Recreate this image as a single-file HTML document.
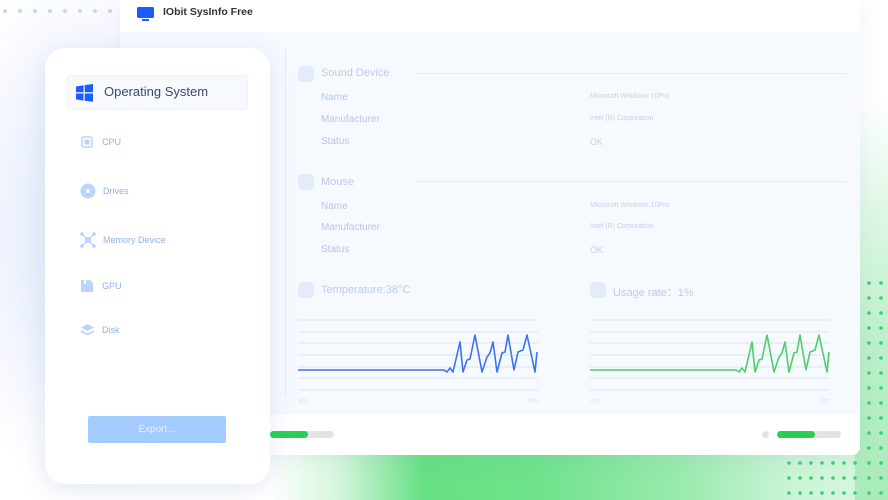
<!DOCTYPE html>
<html style="width:888px;height:500px;overflow:hidden"><head><meta charset="utf-8"><style>
*{margin:0;padding:0;box-sizing:border-box}
body{width:888px;height:500px;overflow:hidden;background:#fff;font-family:"Liberation Sans",sans-serif;position:relative}
.abs{position:absolute}
.t{color:#b5c6ea;font-size:10px}
.v{color:#c3d0ec;font-size:7px}
.h{color:#bccbee;font-size:11px}
.chk{width:16px;height:16px;border-radius:4px;background:#e4ecfb}
.nav{position:absolute;left:80px;font-size:9px;color:#8fb0f0;display:flex;align-items:center}
</style></head><body>
<div class="abs" style="left:-60px;top:-40px;width:300px;height:540px;background:radial-gradient(closest-side,#dfe8fb 0%,#eef3fd 55%,rgba(255,255,255,0) 100%)"></div>
<div class="abs" style="left:270px;top:440px;width:590px;height:60px;background:linear-gradient(90deg,rgba(255,255,255,0) 0%,rgba(180,240,195,.6) 12%,#66e084 26%,#6fe28b 45%,#9beaaf 70%,#c9f4d5 88%,#d6f6de 100%)"></div>
<div class="abs" style="left:855px;top:100px;width:33px;height:400px;background:linear-gradient(#fff 0%,#e2f8e8 25%,#bdf0ca 60%,#a8ebb9 100%)"></div>
<svg class="abs" style="left:0;top:0" width="888" height="500">
<g fill="#c6d6f6">
<circle cx="5" cy="11" r="2"/><circle cx="20" cy="11" r="2"/><circle cx="35" cy="11" r="2"/><circle cx="50" cy="11" r="2"/><circle cx="65" cy="11" r="2"/><circle cx="80" cy="11" r="2"/><circle cx="95" cy="11" r="2"/><circle cx="110" cy="11" r="2"/>
</g>
<g fill="#3ccf6a">
<circle cx="869" cy="283" r="1.8"/><circle cx="881" cy="283" r="1.8"/>
<circle cx="869" cy="298" r="1.8"/><circle cx="881" cy="298" r="1.8"/>
<circle cx="869" cy="313" r="1.8"/><circle cx="881" cy="313" r="1.8"/>
<circle cx="869" cy="328" r="1.8"/><circle cx="881" cy="328" r="1.8"/>
<circle cx="869" cy="343" r="1.8"/><circle cx="881" cy="343" r="1.8"/>
<circle cx="869" cy="358" r="1.8"/><circle cx="881" cy="358" r="1.8"/>
<circle cx="869" cy="373" r="1.8"/><circle cx="881" cy="373" r="1.8"/>
<circle cx="869" cy="388" r="1.8"/><circle cx="881" cy="388" r="1.8"/>
<circle cx="869" cy="403" r="1.8"/><circle cx="881" cy="403" r="1.8"/>
<circle cx="869" cy="418" r="1.8"/><circle cx="881" cy="418" r="1.8"/>
<circle cx="869" cy="433" r="1.8"/><circle cx="881" cy="433" r="1.8"/>
<circle cx="869" cy="448" r="1.8"/><circle cx="881" cy="448" r="1.8"/>
</g>
<g fill="#3ccf6a">
<circle cx="789" cy="463" r="1.8"/><circle cx="800" cy="463" r="1.8"/><circle cx="811" cy="463" r="1.8"/><circle cx="822" cy="463" r="1.8"/><circle cx="833" cy="463" r="1.8"/><circle cx="844" cy="463" r="1.8"/><circle cx="855" cy="463" r="1.8"/><circle cx="869" cy="463" r="1.8"/><circle cx="881" cy="463" r="1.8"/>
<circle cx="789" cy="478" r="1.8"/><circle cx="800" cy="478" r="1.8"/><circle cx="811" cy="478" r="1.8"/><circle cx="822" cy="478" r="1.8"/><circle cx="833" cy="478" r="1.8"/><circle cx="844" cy="478" r="1.8"/><circle cx="855" cy="478" r="1.8"/><circle cx="869" cy="478" r="1.8"/><circle cx="881" cy="478" r="1.8"/>
<circle cx="789" cy="493" r="1.8"/><circle cx="800" cy="493" r="1.8"/><circle cx="811" cy="493" r="1.8"/><circle cx="822" cy="493" r="1.8"/><circle cx="833" cy="493" r="1.8"/><circle cx="844" cy="493" r="1.8"/><circle cx="855" cy="493" r="1.8"/><circle cx="869" cy="493" r="1.8"/><circle cx="881" cy="493" r="1.8"/>
</g>
</svg>
<div class="abs" style="left:120px;top:0;width:740px;height:455px;background:#fff;border-radius:0 0 8px 8px;box-shadow:0 4px 20px rgba(120,150,200,.12)"></div>
<div class="abs" style="left:120px;top:32px;width:740px;height:383px;background:#f6f9fe"></div>
<svg class="abs" style="left:137px;top:6px" width="18" height="16"><rect x="0" y="1" width="17" height="11" rx="1.5" fill="#1a5cff"/><rect x="5" y="13" width="7" height="2" fill="#1a5cff"/></svg>
<div class="abs" style="left:163px;top:6px;font-size:10.5px;font-weight:bold;color:#333">IObit SysInfo Free</div>
<div class="abs" style="left:285px;top:48px;width:1px;height:347px;background:#e3eaf7"></div>
<div class="abs chk" style="left:298px;top:66px"></div>
<div class="abs h" style="left:321px;top:67px">Sound Device</div>
<div class="abs" style="left:415px;top:73px;width:432px;height:1px;background:#e3eaf8"></div>
<div class="abs t" style="left:321px;top:92px">Name</div><div class="abs v" style="left:590px;top:93px">Microsoft Windows 10Pro</div>
<div class="abs t" style="left:321px;top:114px">Manufacturer</div><div class="abs v" style="left:590px;top:115px">Intel (R) Corporation</div>
<div class="abs t" style="left:321px;top:136px">Status</div><div class="abs v" style="left:590px;top:137px;font-size:9px">OK</div>
<div class="abs chk" style="left:298px;top:174px"></div>
<div class="abs h" style="left:321px;top:176px">Mouse</div>
<div class="abs" style="left:415px;top:181px;width:432px;height:1px;background:#e3eaf8"></div>
<div class="abs t" style="left:321px;top:201px">Name</div><div class="abs v" style="left:590px;top:202px">Microsoft Windows 10Pro</div>
<div class="abs t" style="left:321px;top:222px">Manufacturer</div><div class="abs v" style="left:590px;top:223px">Intel (R) Corporation</div>
<div class="abs t" style="left:321px;top:244px">Status</div><div class="abs v" style="left:590px;top:245px;font-size:9px">OK</div>
<div class="abs chk" style="left:298px;top:282px"></div>
<div class="abs h" style="left:321px;top:284px">Temperature:38°C</div>
<div class="abs chk" style="left:590px;top:282px"></div>
<div class="abs h" style="left:613px;top:284px">Usage rate：1%</div>
<svg class="abs" style="left:0;top:0" width="888" height="500">
<g stroke="#e4ebf8" stroke-width="1.5">
<path d="M298 320H538M298 332H538M298 343H538M298 355H538M298 367H538M298 378H538M298 390H538"/>
<path d="M590 320H830M590 332H830M590 343H830M590 355H830M590 367H830M590 378H830M590 390H830"/>
</g>
<path fill="none" stroke="#3a74ee" stroke-width="1.6" stroke-linejoin="round" d="M298 370H444L447 372L450 368L453 372L460 342L463 372L467 360L470 359L475 335L482 372L487 357L490 353L493 342L497 372L502 353L505 352L508 335L514 370L518 352L523 350L527 335L535 372L537 352"/>
<path fill="none" stroke="#4fcf68" stroke-width="1.6" stroke-linejoin="round" d="M590 370H736L739 372L742 368L745 372L752 342L755 372L759 360L762 359L767 335L774 372L779 357L782 353L785 342L789 372L794 353L797 352L800 335L806 370L810 352L815 350L819 335L827 372L829 352"/>
<g fill="#dbe5f7" font-size="7" font-family="Liberation Sans"><text x="298" y="403">3m</text><text x="528" y="403">0m</text><text x="590" y="403">3m</text><text x="820" y="403">0m</text></g>
</svg>
<div class="abs" style="left:270px;top:431px;width:64px;height:7px;border-radius:4px;background:#e3e3e3"><div style="width:38px;height:7px;border-radius:4px;background:#29cf55"></div></div>
<div class="abs" style="left:762px;top:431px;width:7px;height:7px;border-radius:4px;background:#e3e3e3"></div>
<div class="abs" style="left:777px;top:431px;width:64px;height:7px;border-radius:4px;background:#e3e3e3"><div style="width:38px;height:7px;border-radius:4px;background:#29cf55"></div></div>
<div class="abs" style="left:45px;top:48px;width:225px;height:436px;background:#fff;border-radius:20px;box-shadow:0 6px 24px rgba(110,140,200,.18)"></div>
<div class="abs" style="left:67px;top:75px;width:181px;height:35px;background:#f6f9fe;border-radius:3px;border:1px solid #edf2fb"></div>
<svg class="abs" style="left:76px;top:84px" width="18" height="18"><path d="M0 2.5L7.5 1.3V8.3H0ZM8.7 1.1L17 0V8.3H8.7ZM0 9.5H7.5V16.6L0 15.4ZM8.7 9.5H17V17.8L8.7 16.8Z" fill="#1a5cff"/></svg>
<div class="abs" style="left:104px;top:84px;font-size:13px;color:#3a4a6a">Operating System</div>
<div class="nav" style="top:135px"><svg width="14" height="14" style="margin-right:8px"><rect x="2" y="2" width="10" height="10" rx="1.5" fill="none" stroke="#bcd3fb" stroke-width="1.5"/><rect x="4.5" y="4.5" width="5" height="5" fill="#bcd3fb"/></svg>CPU</div>
<div class="nav" style="top:183px"><svg width="16" height="16" style="margin-right:7px"><circle cx="8" cy="8" r="7.5" fill="#bcd3fb"/><circle cx="8" cy="8" r="2" fill="#fff"/></svg>Drives</div>
<div class="nav" style="top:232px"><svg width="16" height="16" style="margin-right:7px"><g fill="#bcd3fb"><circle cx="2" cy="2" r="1.8"/><circle cx="14" cy="2" r="1.8"/><circle cx="2" cy="14" r="1.8"/><circle cx="14" cy="14" r="1.8"/><rect x="5" y="5" width="6" height="6"/></g><path d="M2 2L14 14M14 2L2 14" stroke="#bcd3fb" stroke-width="1.3"/></svg>Memory Device</div>
<div class="nav" style="top:279px"><svg width="14" height="14" style="margin-right:8px"><path d="M1 1H10L13 4V13H1Z" fill="#bcd3fb"/><rect x="4" y="1" width="2" height="4" fill="#fff"/></svg>GPU</div>
<div class="nav" style="top:323px"><svg width="15" height="14" style="margin-right:7px"><path d="M7.5 1L14 4.5L7.5 8L1 4.5Z" fill="#bcd3fb"/><path d="M1 8L7.5 11.5L14 8" fill="none" stroke="#bcd3fb" stroke-width="1.8"/></svg>Disk</div>
<div class="abs" style="left:88px;top:416px;width:138px;height:27px;background:#a3cbfd;border-radius:2px;color:#e6f0ff;font-size:10px;text-align:center;line-height:27px">Export...</div>
</body></html>
